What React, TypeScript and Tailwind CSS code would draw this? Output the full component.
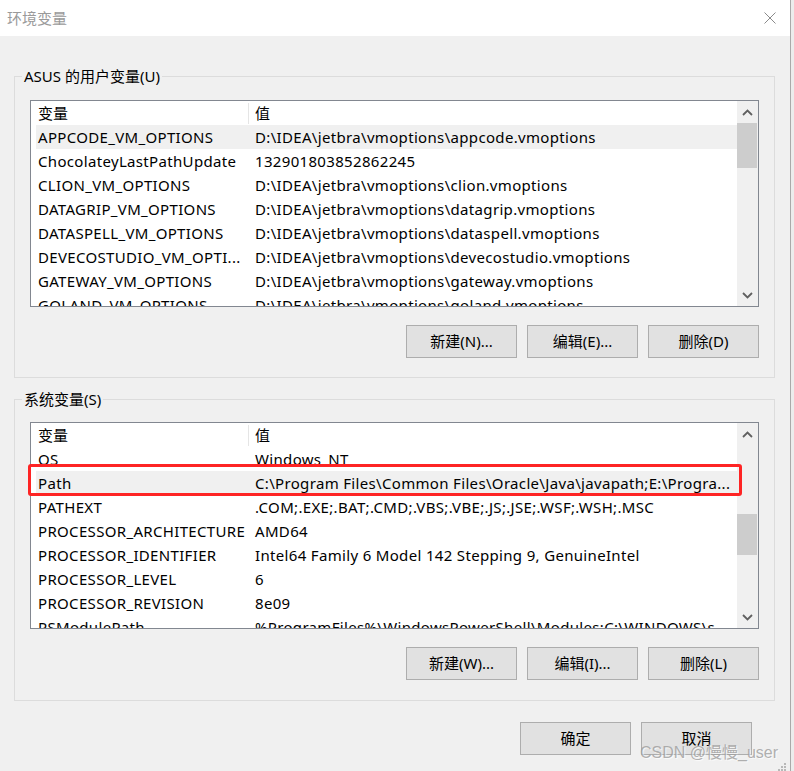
import React from "react";

const userVars: [string, string][] = [
  ["APPCODE_VM_OPTIONS", "D:\\IDEA\\jetbra\\vmoptions\\appcode.vmoptions"],
  ["ChocolateyLastPathUpdate", "132901803852862245"],
  ["CLION_VM_OPTIONS", "D:\\IDEA\\jetbra\\vmoptions\\clion.vmoptions"],
  ["DATAGRIP_VM_OPTIONS", "D:\\IDEA\\jetbra\\vmoptions\\datagrip.vmoptions"],
  ["DATASPELL_VM_OPTIONS", "D:\\IDEA\\jetbra\\vmoptions\\dataspell.vmoptions"],
  ["DEVECOSTUDIO_VM_OPTI...", "D:\\IDEA\\jetbra\\vmoptions\\devecostudio.vmoptions"],
  ["GATEWAY_VM_OPTIONS", "D:\\IDEA\\jetbra\\vmoptions\\gateway.vmoptions"],
  ["GOLAND_VM_OPTIONS", "D:\\IDEA\\jetbra\\vmoptions\\goland.vmoptions"],
];

const sysVars: [string, string][] = [
  ["OS", "Windows_NT"],
  ["Path", "C:\\Program Files\\Common Files\\Oracle\\Java\\javapath;E:\\Progra..."],
  ["PATHEXT", ".COM;.EXE;.BAT;.CMD;.VBS;.VBE;.JS;.JSE;.WSF;.WSH;.MSC"],
  ["PROCESSOR_ARCHITECTURE", "AMD64"],
  ["PROCESSOR_IDENTIFIER", "Intel64 Family 6 Model 142 Stepping 9, GenuineIntel"],
  ["PROCESSOR_LEVEL", "6"],
  ["PROCESSOR_REVISION", "8e09"],
  ["PSModulePath", "%ProgramFiles%\\WindowsPowerShell\\Modules;C:\\WINDOWS\\s..."],
];

function Chevron({ up }: { up: boolean }) {
  return (
    <svg width="11" height="7" viewBox="0 0 11 7" className="block">
      <polyline
        points={up ? "1,6 5.5,1.5 10,6" : "1,1 5.5,5.5 10,1"}
        fill="none"
        stroke="#606060"
        strokeWidth="1.8"
      />
    </svg>
  );
}

function Scrollbar({ thumbTop, thumbH }: { thumbTop: number; thumbH: number }) {
  return (
    <div className="w-[21px] h-full bg-[#f0f0f0] flex flex-col">
      <div className="h-[22px] flex items-center justify-center pr-[1px]">
        <Chevron up />
      </div>
      <div className="flex-1 relative">
        <div
          className="absolute left-0 w-[20px] bg-[#cdcdcd]"
          style={{ top: thumbTop, height: thumbH }}
        />
      </div>
      <div className="h-[22px] flex items-center justify-center pr-[1px]">
        <Chevron up={false} />
      </div>
    </div>
  );
}

function VarList({
  rows,
  highlight,
  thumbTop,
  thumbH,
}: {
  rows: [string, string][];
  highlight: number;
  thumbTop: number;
  thumbH: number;
}) {
  return (
    <div className="w-[729px] h-[207px] border border-[#828790] bg-white flex overflow-hidden">
      <div className="flex-1 flex flex-col overflow-hidden">
        <div className="h-[24px] flex items-center shrink-0">
          <div className="w-[217px] pl-[7px]">变量</div>
          <div className="w-[1px] h-[21px] bg-[#e5e5e5]" />
          <div className="pl-[6px]">值</div>
        </div>
        {rows.map(([k, v], i) => (
          <div
            key={k}
            className={
              "h-[24px] ml-[5px] flex items-center shrink-0 whitespace-nowrap tracking-[0.33px] " +
              (i === highlight ? "bg-[#f0f0f0]" : "")
            }
          >
            <div className="w-[212px] pl-[2px] overflow-hidden">{k}</div>
            <div className="pl-[7px]">{v}</div>
          </div>
        ))}
      </div>
      <Scrollbar thumbTop={thumbTop} thumbH={thumbH} />
    </div>
  );
}

function Btn({ children }: { children: React.ReactNode }) {
  return (
    <div className="w-[111px] h-[33px] bg-[#e1e1e1] border border-[#adadad] flex items-center justify-center">
      {children}
    </div>
  );
}

function Group({
  label,
  pt,
  pb,
  children,
}: {
  label: string;
  pt: string;
  pb: string;
  children: React.ReactNode;
}) {
  return (
    <div className={"relative w-[761px] border border-[#dcdcdc] px-[15px] " + pt + " " + pb}>
      <span className="absolute left-[7px] top-[-12px] px-[2px] bg-[#f0f0f0] leading-[22px]">
        {label}
      </span>
      {children}
    </div>
  );
}

export default function App() {
  return (
    <div className="w-[794px] h-[771px] overflow-hidden flex bg-[#ececec] text-[15px] text-black font-['Noto_Sans','Noto_Sans_CJK_SC',sans-serif] relative">
      <div className="w-[791px] h-full border-r border-[#a9a9a9] flex flex-col">
        <div className="h-[36px] bg-white flex items-center justify-between pl-[7px] pr-[14px] shrink-0">
          <span className="text-[#9a9a9a]">环境变量</span>
          <svg width="12" height="12" viewBox="0 0 12 12">
            <path d="M0.5 0.5 L11.5 11.5 M11.5 0.5 L0.5 11.5" stroke="#8a8a8a" strokeWidth="1" />
          </svg>
        </div>
        <div className="flex-1 bg-[#f0f0f0] pl-[14px] pt-[40px] flex flex-col">
          <Group label="ASUS 的用户变量(U)" pt="pt-[23px]" pb="pb-[19px]">
            <VarList rows={userVars} highlight={0} thumbTop={0} thumbH={45} />
            <div className="flex justify-end gap-[10px] mt-[18px]">
              <Btn>新建(N)...</Btn>
              <Btn>编辑(E)...</Btn>
              <Btn>删除(D)</Btn>
            </div>
          </Group>
          <div className="h-[21px]" />
          <Group label="系统变量(S)" pt="pt-[22px]" pb="pb-[20px]">
            <VarList rows={sysVars} highlight={1} thumbTop={69} thumbH={41} />
            <div className="flex justify-end gap-[10px] mt-[18px]">
              <Btn>新建(W)...</Btn>
              <Btn>编辑(I)...</Btn>
              <Btn>删除(L)</Btn>
            </div>
          </Group>
          <div className="flex justify-end gap-[10px] mt-[21px] pr-[38px]">
            <Btn>确定</Btn>
            <Btn>取消</Btn>
          </div>
        </div>
      </div>
      <div className="absolute left-[28px] top-[464px] w-[714px] h-[32px] border-[3px] border-[#fe2424] rounded-[3px]" />
      <div className="absolute left-[640px] top-[741px] text-[16px] text-[#9c9c9c]/80 font-['Liberation_Sans','Noto_Sans_CJK_SC',sans-serif] [text-shadow:1px_1px_1px_rgba(255,255,255,0.8)] whitespace-nowrap">
        CSDN @慢慢_user
      </div>
      <svg className="absolute left-[778px] top-[763px]" width="9" height="9" viewBox="0 0 9 9">
        <rect x="6" y="0" width="2" height="2" fill="#b8b8b8" />
        <rect x="3" y="3" width="2" height="2" fill="#b8b8b8" />
        <rect x="6" y="3" width="2" height="2" fill="#b8b8b8" />
        <rect x="0" y="6" width="2" height="2" fill="#b8b8b8" />
        <rect x="3" y="6" width="2" height="2" fill="#b8b8b8" />
        <rect x="6" y="6" width="2" height="2" fill="#b8b8b8" />
      </svg>
    </div>
  );
}
